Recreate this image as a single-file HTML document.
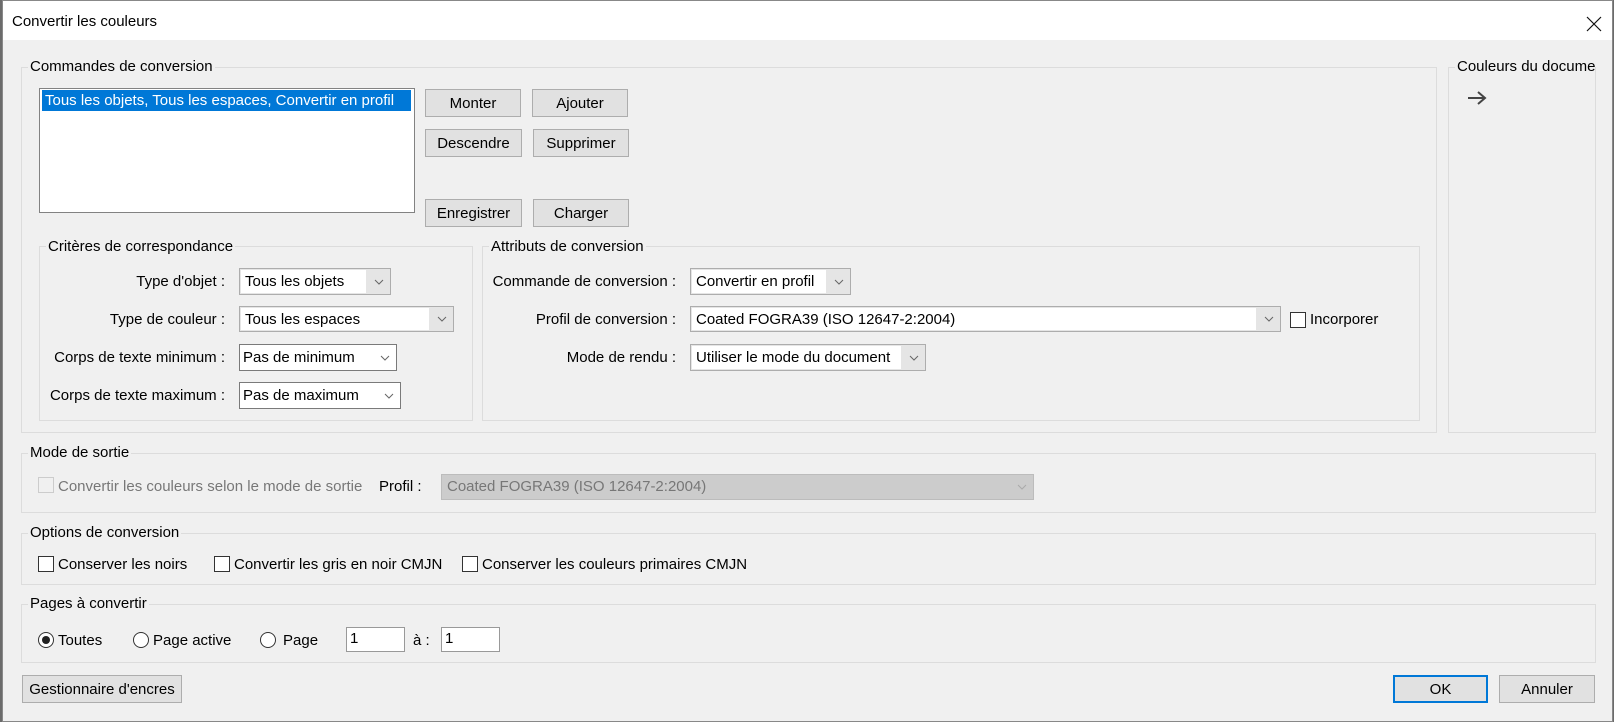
<!DOCTYPE html>
<html><head><meta charset="utf-8"><style>
*{box-sizing:border-box;margin:0;padding:0}
body{width:1614px;height:722px;overflow:hidden;background:#6b6b6b;font-family:"Liberation Sans",Arial,sans-serif;font-size:15px;color:#000;position:relative}
.dlg{position:absolute;left:2px;top:0;width:1611px;height:722px;background:#f0f0f0;border:1px solid #888}
.tb{position:absolute;left:0;top:0;width:100%;height:39px;background:#fff}
.a{position:absolute;white-space:nowrap}
.g{position:absolute;border:1px solid #dcdcdc}
.gl{position:absolute;background:#f0f0f0;padding:0 2px;white-space:nowrap;line-height:17px}
.btn{position:absolute;background:#e1e1e1;border:1px solid #adadad;text-align:center;line-height:27px}
.cb{position:absolute;background:#e5e5e5;border:1px solid #adadad}
.cb .f{position:absolute;left:1px;top:1px;bottom:1px;background:#fff;padding-left:4px;line-height:23px;white-space:nowrap;overflow:hidden}
.cbw{position:absolute;background:#fff;border:1px solid #7a7a7a;padding-left:3px;line-height:25px;white-space:nowrap}
.ar{position:absolute;right:6px;top:50%;margin-top:-3px;width:10px;height:6px}
.chk{position:absolute;width:16px;height:16px;border:1px solid #333;background:#fff}
.rad{position:absolute;width:16px;height:16px;border:1px solid #333;border-radius:50%;background:#fff}
.lab{position:absolute;text-align:right;white-space:nowrap;line-height:20px}
</style></head><body>
<div class="dlg">
<div class="tb"></div>
<div class="a" style="left:9px;top:12px;font-size:15px">Convertir les couleurs</div>
<svg class="a" style="left:1583px;top:15px" width="16" height="16"><path d="M1 1L15 15M15 1L1 15" stroke="#111" stroke-width="1.2"/></svg>

<!-- Commandes -->
<div class="g" style="left:18px;top:66px;width:1416px;height:366px"></div>
<div class="gl" style="left:25px;top:57px">Commandes de conversion</div>
<div style="position:absolute;left:36px;top:87px;width:376px;height:125px;background:#fff;border:1px solid #828282">
 <div style="position:absolute;left:2px;top:1px;width:369px;height:21px;background:#0078d7;color:#fff;padding-left:3px;line-height:21px;white-space:nowrap">Tous les objets, Tous les espaces, Convertir en profil</div>
</div>
<div class="btn" style="left:422px;top:88px;width:96px;height:28px">Monter</div>
<div class="btn" style="left:529px;top:88px;width:96px;height:28px">Ajouter</div>
<div class="btn" style="left:422px;top:128px;width:97px;height:28px">Descendre</div>
<div class="btn" style="left:530px;top:128px;width:96px;height:28px">Supprimer</div>
<div class="btn" style="left:422px;top:198px;width:97px;height:28px">Enregistrer</div>
<div class="btn" style="left:530px;top:198px;width:96px;height:28px">Charger</div>

<!-- Criteres -->
<div class="g" style="left:36px;top:245px;width:434px;height:175px"></div>
<div class="gl" style="left:43px;top:237px">Critères de correspondance</div>
<div class="lab" style="right:1387px;top:271px">Type d'objet :</div>
<div class="cb" style="left:236px;top:267px;width:152px;height:27px"><div class="f" style="right:24px">Tous les objets</div><svg class="ar" viewBox="0 0 10 6"><path d="M1 1L5 5L9 1" fill="none" stroke="#666"/></svg></div>
<div class="lab" style="right:1387px;top:309px">Type de couleur :</div>
<div class="cb" style="left:236px;top:305px;width:215px;height:26px"><div class="f" style="right:24px">Tous les espaces</div><svg class="ar" viewBox="0 0 10 6"><path d="M1 1L5 5L9 1" fill="none" stroke="#666"/></svg></div>
<div class="lab" style="right:1387px;top:347px">Corps de texte minimum :</div>
<div class="cbw" style="left:236px;top:343px;width:158px;height:27px">Pas de minimum<svg class="ar" viewBox="0 0 10 6"><path d="M1 1L5 5L9 1" fill="none" stroke="#666"/></svg></div>
<div class="lab" style="right:1387px;top:385px">Corps de texte maximum :</div>
<div class="cbw" style="left:236px;top:381px;width:162px;height:27px">Pas de maximum<svg class="ar" viewBox="0 0 10 6"><path d="M1 1L5 5L9 1" fill="none" stroke="#666"/></svg></div>

<!-- Attributs -->
<div class="g" style="left:479px;top:245px;width:938px;height:175px"></div>
<div class="gl" style="left:486px;top:237px">Attributs de conversion</div>
<div class="lab" style="right:936px;top:271px">Commande de conversion :</div>
<div class="cb" style="left:687px;top:267px;width:161px;height:27px"><div class="f" style="right:24px">Convertir en profil</div><svg class="ar" viewBox="0 0 10 6"><path d="M1 1L5 5L9 1" fill="none" stroke="#666"/></svg></div>
<div class="lab" style="right:936px;top:309px">Profil de conversion :</div>
<div class="cb" style="left:687px;top:305px;width:591px;height:26px"><div class="f" style="right:24px">Coated FOGRA39 (ISO 12647-2:2004)</div><svg class="ar" viewBox="0 0 10 6"><path d="M1 1L5 5L9 1" fill="none" stroke="#666"/></svg></div>
<div class="chk" style="left:1287px;top:311px"></div>
<div class="a" style="left:1307px;top:310px">Incorporer</div>
<div class="lab" style="right:936px;top:347px">Mode de rendu :</div>
<div class="cb" style="left:687px;top:343px;width:236px;height:27px"><div class="f" style="right:24px">Utiliser le mode du document</div><svg class="ar" viewBox="0 0 10 6"><path d="M1 1L5 5L9 1" fill="none" stroke="#666"/></svg></div>

<!-- Couleurs du document -->
<div class="g" style="left:1445px;top:66px;width:148px;height:366px"></div>
<div class="gl" style="left:1452px;top:57px;width:140px;overflow:hidden;padding-right:0">Couleurs du documen</div>
<svg class="a" style="left:1464px;top:89px" width="20" height="16"><path d="M1 8H18M11 2L18 8L11 14" fill="none" stroke="#444" stroke-width="2"/></svg>

<!-- Mode de sortie -->
<div class="g" style="left:18px;top:452px;width:1575px;height:60px"></div>
<div class="gl" style="left:25px;top:443px">Mode de sortie</div>
<div class="chk" style="left:35px;top:476px;border-color:#ccc;background:#f0f0f0"></div>
<div class="a" style="left:55px;top:477px;color:#777">Convertir les couleurs selon le mode de sortie</div>
<div class="a" style="left:376px;top:477px">Profil :</div>
<div class="cb" style="left:438px;top:473px;width:593px;height:26px;background:#ccc;border-color:#bcbcbc"><div class="a" style="left:5px;top:3px;color:#777">Coated FOGRA39 (ISO 12647-2:2004)</div><svg class="ar" viewBox="0 0 10 6"><path d="M1 1L5 5L9 1" fill="none" stroke="#aaa"/></svg></div>

<!-- Options -->
<div class="g" style="left:18px;top:532px;width:1575px;height:52px"></div>
<div class="gl" style="left:25px;top:523px">Options de conversion</div>
<div class="chk" style="left:35px;top:555px"></div><div class="a" style="left:55px;top:555px">Conserver les noirs</div>
<div class="chk" style="left:211px;top:555px"></div><div class="a" style="left:231px;top:555px">Convertir les gris en noir CMJN</div>
<div class="chk" style="left:459px;top:555px"></div><div class="a" style="left:479px;top:555px">Conserver les couleurs primaires CMJN</div>

<!-- Pages -->
<div class="g" style="left:18px;top:603px;width:1575px;height:59px"></div>
<div class="gl" style="left:25px;top:594px">Pages à convertir</div>
<div class="rad" style="left:35px;top:631px"><div style="position:absolute;left:3px;top:3px;width:8px;height:8px;border-radius:50%;background:#222"></div></div>
<div class="a" style="left:55px;top:631px">Toutes</div>
<div class="rad" style="left:130px;top:631px"></div><div class="a" style="left:150px;top:631px">Page active</div>
<div class="rad" style="left:257px;top:631px"></div><div class="a" style="left:280px;top:631px">Page</div>
<div class="cbw" style="left:343px;top:626px;width:59px;height:25px;border-color:#999;line-height:22px">1</div>
<div class="a" style="left:410px;top:631px">à :</div>
<div class="cbw" style="left:438px;top:626px;width:59px;height:25px;border-color:#999;line-height:22px">1</div>

<div class="btn" style="left:19px;top:674px;width:160px;height:28px">Gestionnaire d'encres</div>
<div class="btn" style="left:1390px;top:674px;width:95px;height:28px;border:2px solid #0078d7;line-height:25px">OK</div>
<div class="btn" style="left:1496px;top:674px;width:96px;height:28px">Annuler</div>
</div>
</body></html>
